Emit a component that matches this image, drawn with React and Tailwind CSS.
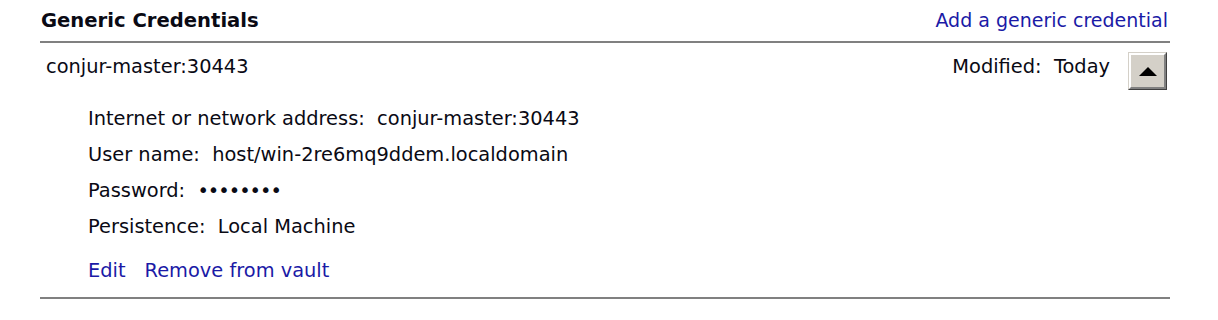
import React from "react";

const FONT = { fontFamily: '"DejaVu Sans", Verdana, sans-serif' };

const DETAILS = [
  ["Internet or network address:", "conjur-master:30443"],
  ["User name:", "host/win-2re6mq9ddem.localdomain"],
  ["Password:", "••••••••"],
  ["Persistence:", "Local Machine"],
];

function ToggleButton() {
  return (
    <button className="w-[39px] h-[38px] border border-t-[#d4d0c8] border-l-[#d4d0c8] border-r-[#404040] border-b-[#404040] bg-[#d4d0c8] p-0">
      <div className="w-full h-full border-2 border-t-white border-l-white border-r-[#808080] border-b-[#808080] flex items-center justify-center">
        <svg width="18" height="9" viewBox="0 0 18 9">
          <polygon points="9,0 18,9 0,9" fill="#000" />
        </svg>
      </div>
    </button>
  );
}

export default function App() {
  return (
    <div className="w-[1218px] h-[320px] bg-white text-[19.4px] text-[#0a0a14]" style={FONT}>
      <div className="ml-[40px] w-[1130px]">
        {/* header */}
        <div className="h-[41px] flex items-center justify-between">
          <h2 className="font-bold text-[19.6px] leading-none pl-[1px]">Generic Credentials</h2>
          <a href="#" className="text-[#1a1aa6] leading-none pr-[2px] text-[19px]">Add a generic credential</a>
        </div>
        <div className="h-[2px] bg-[#808080]" />

        {/* credential row */}
        <div className="h-[47px] flex items-start justify-between">
          <span className="mt-[13px] leading-[22px] pl-[6px]">conjur-master:30443</span>
          <div className="flex items-start gap-[18px] pr-[3px]">
            <span className="mt-[13px] leading-[22px] whitespace-pre">Modified:  Today</span>
            <div className="mt-[9px]">
              <ToggleButton />
            </div>
          </div>
        </div>

        {/* details */}
        <div className="pl-[48px] pt-[11px]">
          {DETAILS.map(([label, value]) => (
            <div key={label} className="h-[36px] flex items-center whitespace-pre">
              {label}{"  "}
              <span className={label === "Password:" ? "tracking-[-1px]" : ""}>{value}</span>
            </div>
          ))}
          <div className="mt-[8px] h-[36px] flex items-center gap-[19px] text-[#1a1aa6]">
            <a href="#">Edit</a>
            <a href="#">Remove from vault</a>
          </div>
        </div>
        <div className="mt-[8px] h-[2px] bg-[#808080]" />
      </div>
    </div>
  );
}
